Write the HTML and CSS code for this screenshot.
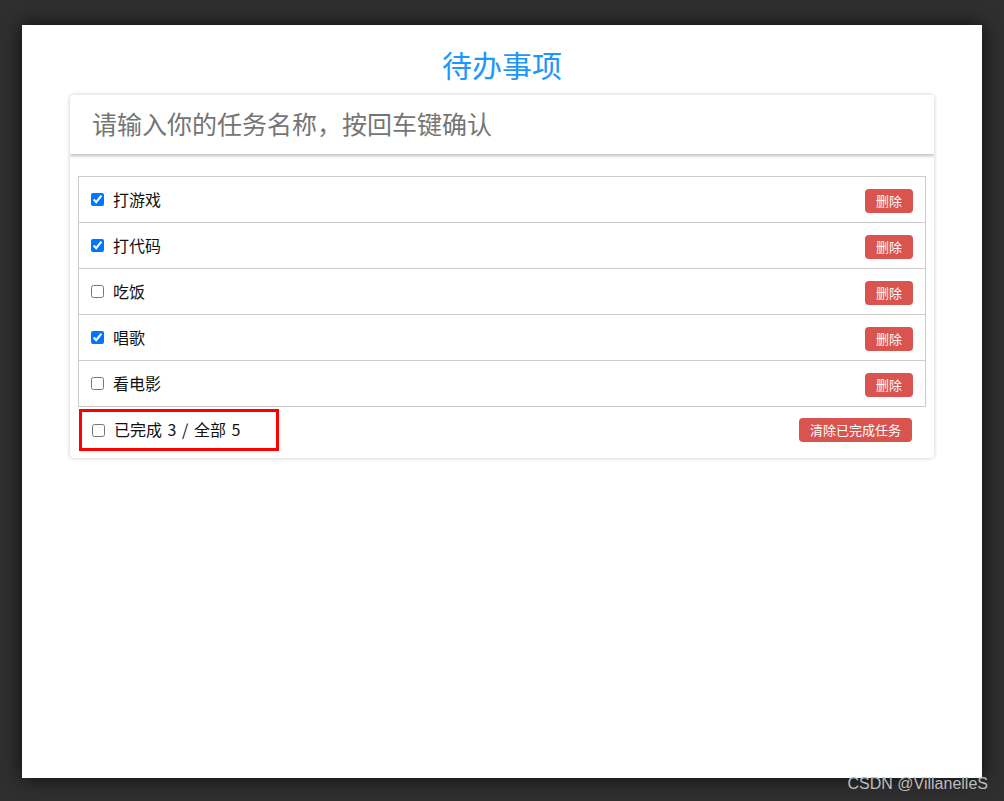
FILE: index.html
```html
<!DOCTYPE html>
<html lang="zh-CN">
<head>
    <meta charset="UTF-8">
    <title>待办事项</title>
    <link rel="stylesheet" href="styles.css">
</head>
<body>
    <div class="window">
        <h1 class="title">待办事项</h1>

        <div class="todo-card">
            <!-- 输入框 -->
            <div class="todo-header">
                <input type="text" placeholder="请输入你的任务名称，按回车键确认">
            </div>

            <!-- 列表 -->
            <ul class="todo-list">
                <li class="todo-item">
                    <label><input type="checkbox" checked><span>打游戏</span></label>
                    <button class="btn-danger">删除</button>
                </li>
                <li class="todo-item">
                    <label><input type="checkbox" checked><span>打代码</span></label>
                    <button class="btn-danger">删除</button>
                </li>
                <li class="todo-item">
                    <label><input type="checkbox"><span>吃饭</span></label>
                    <button class="btn-danger">删除</button>
                </li>
                <li class="todo-item">
                    <label><input type="checkbox" checked><span>唱歌</span></label>
                    <button class="btn-danger">删除</button>
                </li>
                <li class="todo-item">
                    <label><input type="checkbox"><span>看电影</span></label>
                    <button class="btn-danger">删除</button>
                </li>
            </ul>

            <!-- 底部 -->
            <div class="todo-footer">
                <label class="footer-count">
                    <input type="checkbox">
                    <span>已完成 3 / 全部 5</span>
                </label>
                <button class="btn-danger">清除已完成任务</button>
            </div>
        </div>
    </div>

    <div class="watermark">CSDN @VillanelleS</div>
</body>
</html>
```

FILE: styles.css
```css
html, body {
    margin: 0;
    height: 801px;
    overflow: hidden;
}

body {
    background-color: #2f2f2f;
    font-family: "Noto Sans CJK SC", sans-serif;
    color: #111;
    padding-top: 25px;
    box-sizing: border-box;
}

.window {
    margin: 0 22px;
    height: 753px;
    background-color: #fff;
    box-shadow: 0 0 18px rgba(0, 0, 0, 0.75);
    overflow: hidden;
}

.title {
    margin: 19px 0 11px;
    text-align: center;
    font-size: 30px;
    line-height: 40px;
    font-weight: normal;
    color: #1e96fa;
}

/* Card */
.todo-card {
    margin: 0 48px;
    border-radius: 4px;
    box-shadow: 0 0 4px rgba(0, 0, 0, 0.22);
    overflow: hidden;
}

.todo-header {
    box-shadow: 0 2px 3px rgba(0, 0, 0, 0.25);
}

.todo-header input {
    display: block;
    width: 100%;
    height: 59px;
    box-sizing: border-box;
    border: none;
    padding: 0 22px 4px;
    font-family: "Noto Sans CJK SC", sans-serif;
    font-size: 25px;
    color: #333;
}

.todo-header input::placeholder {
    color: #757575;
}

.todo-header input:focus {
    outline: none;
}

/* List */
.todo-list {
    list-style: none;
    margin: 22px 8px 0;
    padding: 0;
    border: 1px solid #ccc;
    border-bottom: none;
}

.todo-item {
    display: flex;
    align-items: center;
    justify-content: space-between;
    height: 45px;
    padding: 0 12px 0 12px;
    border-bottom: 1px solid #ccc;
}

.todo-item label,
.footer-count {
    display: flex;
    align-items: center;
    font-size: 16px;
}

.todo-item label span {
    margin-top: -1px;
}

.todo-item input,
.footer-count input {
    width: 13px;
    height: 13px;
    margin: 0 9px 0 0;
}

.btn-danger {
    height: 24px;
    padding: 0 11px;
    border: none;
    border-radius: 4px;
    background-color: #d9534f;
    color: #fff;
    font-family: "Noto Sans CJK SC", sans-serif;
    font-size: 13px;
    line-height: 24px;
    cursor: pointer;
}

.todo-item .btn-danger {
    margin-top: 3px;
}

/* Footer */
.todo-footer {
    display: flex;
    align-items: center;
    justify-content: space-between;
    padding: 2px 22px 7px 9px;
}

.footer-count {
    width: 200px;
    height: 42px;
    box-sizing: border-box;
    border: 3px solid #f00;
    padding-left: 10px;
}

.footer-count span {
    word-spacing: 2px;
    margin-top: -2px;
}

.watermark {
    position: absolute;
    right: 16px;
    bottom: 8px;
    font-family: "Liberation Sans", Arial, sans-serif;
    font-size: 16px;
    color: #bdbdbd;
}
```
